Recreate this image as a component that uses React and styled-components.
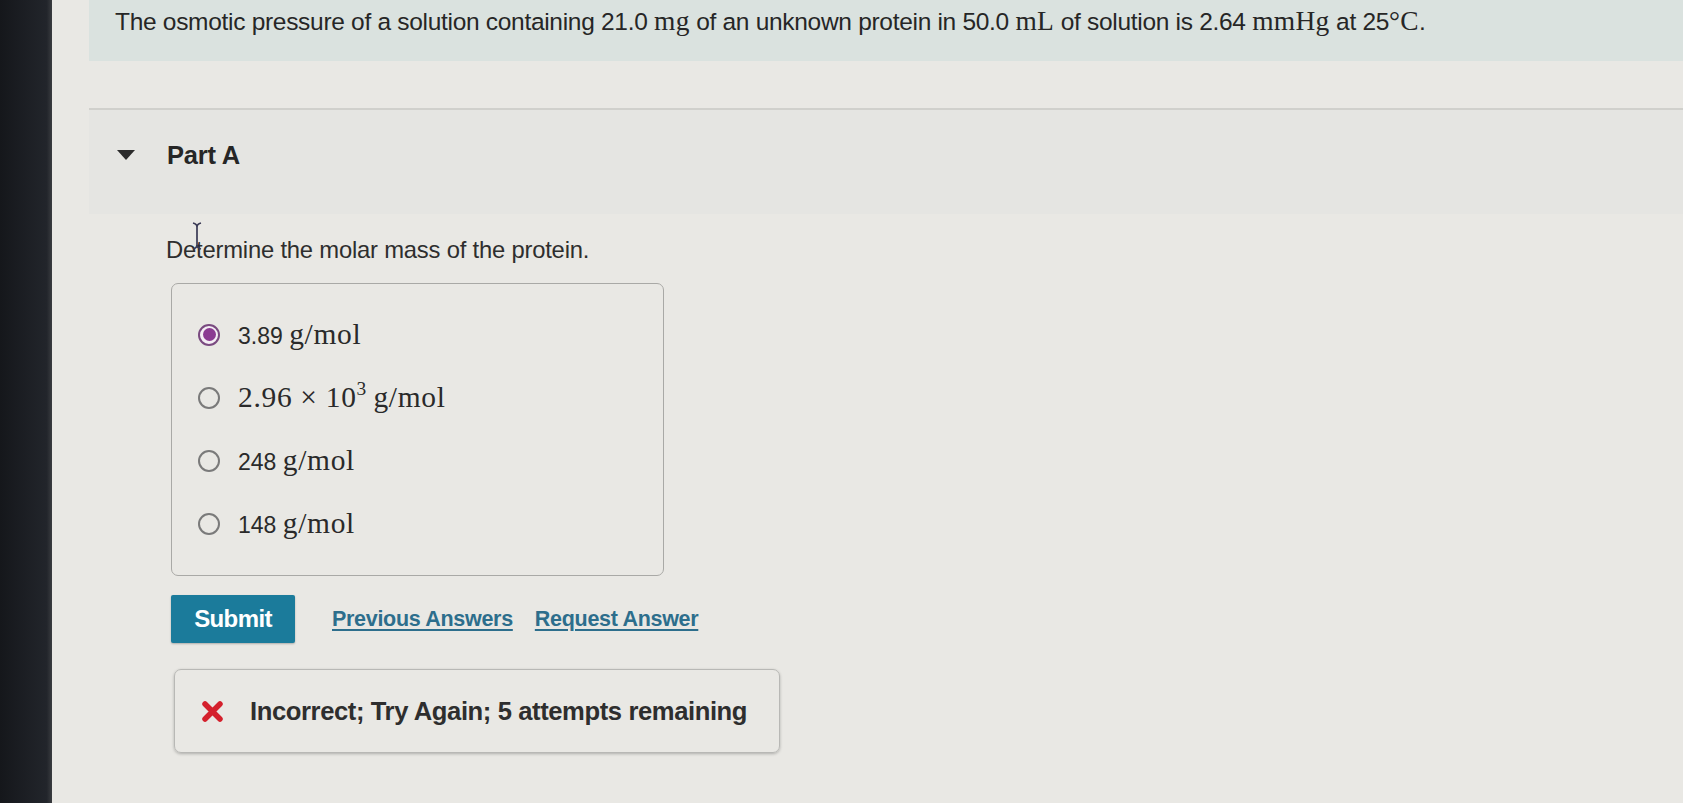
import React from "react";
import styled, { createGlobalStyle } from "styled-components";

const Global = createGlobalStyle`
  html, body {
    margin: 0;
    padding: 0;
    background: #1b1d22;
  }
  body {
    font-family: "Liberation Sans", Arial, sans-serif;
    color: #2f2f2f;
  }
`;

const options = [
  { id: "a", num: "3.89", unit: "g/mol", checked: true },
  { id: "b", num: "2.96 × 10", sup: "3", unit: "g/mol", math: true },
  { id: "c", num: "248", unit: "g/mol" },
  { id: "d", num: "148", unit: "g/mol" },
];

const App = () => {
  return (
    <Screen>
      <Global />
      <Bezel />
      <Page>
        <Banner>
          <Question>
            The osmotic pressure of a solution containing 21.0 <M>mg</M> of an unknown
            protein in 50.0 <M>mL</M> of solution is 2.64 <M>mmHg</M> at 25<M>°C</M>.
          </Question>
        </Banner>
        <Divider />
        <PartHeader>
          <Caret viewBox="0 0 20 12">
            <path d="M1 1 L19 1 L10 11 Z" fill="#2b2b2b" />
          </Caret>
          <PartTitle>Part A</PartTitle>
        </PartHeader>
        <Body>
          <Prompt>
            Determine the molar mass of the protein.
            <Cursor viewBox="0 0 12 28">
              <path d="M2 1 Q6 2 6 5 Q6 2 10 1 M6 5 V23 M2 27 Q6 26 6 23 Q6 26 10 27" stroke="#3a3a55" strokeWidth="1.7" fill="none" />
            </Cursor>
          </Prompt>
          <Choices>
            {options.map((o) => (
              <Choice key={o.id}>
                <Radio $checked={o.checked} />
                <ChoiceText>
                  {o.math ? (
                    <MathText>
                      {o.num}
                      <sup>{o.sup}</sup>
                    </MathText>
                  ) : (
                    <span>{o.num}</span>
                  )}{" "}
                  <MathText>{o.unit}</MathText>
                </ChoiceText>
              </Choice>
            ))}
          </Choices>
          <Actions>
            <SubmitButton>Submit</SubmitButton>
            <LinkText>Previous Answers</LinkText>
            <LinkText>Request Answer</LinkText>
          </Actions>
          <Feedback>
            <XMark viewBox="0 0 20 20">
              <path d="M3.5 3.5 L16.5 16.5 M16.5 3.5 L3.5 16.5" stroke="#d4202c" strokeWidth="4.8" strokeLinecap="round" />
            </XMark>
            <FeedbackText>Incorrect; Try Again; 5 attempts remaining</FeedbackText>
          </Feedback>
        </Body>
      </Page>
    </Screen>
  );
};

export default App;

const Screen = styled.div`
  display: flex;
  width: 100%;
  height: 803px;
  overflow: hidden;
`;

const Bezel = styled.div`
  width: 52px;
  flex-shrink: 0;
  background: linear-gradient(90deg, #15171b 0%, #22252b 90%, #3a3c40 100%);
`;

const Page = styled.div`
  flex: 1;
  background: #e9e8e4;
  padding-left: 37px;
  display: flex;
  flex-direction: column;
`;

const Banner = styled.div`
  height: 61px;
  background: #dae2df;
  display: flex;
  align-items: flex-start;
  padding: 6px 0 0 26px;
  box-sizing: border-box;
`;

const Question = styled.div`
  font-size: 24.5px;
  color: #262626;
  letter-spacing: -0.3px;
  white-space: nowrap;
`;

const M = styled.span`
  font-family: "Liberation Serif", "Times New Roman", serif;
  font-size: 1.12em;
  letter-spacing: 0.3px;
`;

const MathText = styled.span`
  font-family: "Liberation Serif", "Times New Roman", serif;
  font-size: 1.28em;
  letter-spacing: 0.7px;

  sup {
    font-size: 0.66em;
    vertical-align: 0.62em;
    line-height: 0;
  }
`;

const Divider = styled.div`
  margin-top: 47px;
  height: 2px;
  background: #d0d0cc;
`;

const PartHeader = styled.div`
  height: 104px;
  background: #e5e5e2;
  display: flex;
  align-items: center;
  padding-left: 27px;
  padding-bottom: 14px;
  box-sizing: border-box;
`;

const Caret = styled.svg`
  width: 20px;
  height: 12px;
`;

const PartTitle = styled.div`
  margin-left: 31px;
  font-size: 25.5px;
  font-weight: bold;
  letter-spacing: -0.2px;
  color: #262626;
`;

const Body = styled.div`
  padding-left: 82px;
  display: flex;
  flex-direction: column;
  align-items: flex-start;
`;

const Prompt = styled.div`
  position: relative;
  margin-top: 22px;
  margin-left: -5px;
  font-size: 23.8px;
  letter-spacing: -0.2px;
  color: #2e2e2e;
`;

const Cursor = styled.svg`
  position: absolute;
  left: 25px;
  top: -14px;
  width: 12px;
  height: 28px;
`;

const Choices = styled.div`
  margin-top: 19px;
  width: 493px;
  height: 293px;
  box-sizing: border-box;
  border: 1.5px solid #a9a9a6;
  border-radius: 7px;
  padding: 32px 0 0 26px;
  display: flex;
  flex-direction: column;
  gap: 26px;
`;

const Choice = styled.div`
  display: flex;
  align-items: center;
  height: 37px;
`;

const Radio = styled.span`
  flex-shrink: 0;
  width: 22px;
  height: 22px;
  border-radius: 50%;
  border: 2px solid ${(p) => (p.$checked ? "#7a4a80" : "#7a7a7a")};
  box-sizing: border-box;
  position: relative;
  background: ${(p) => (p.$checked ? "#f4eef4" : "transparent")};

  &::after {
    content: "";
    display: ${(p) => (p.$checked ? "block" : "none")};
    position: absolute;
    inset: 2.5px;
    border-radius: 50%;
    background: #8b3a92;
  }
`;

const ChoiceText = styled.span`
  margin-left: 18px;
  font-size: 23px;
  color: #2a2a2a;
`;

const Actions = styled.div`
  margin-top: 19px;
  display: flex;
  align-items: center;
`;

const SubmitButton = styled.button`
  width: 124px;
  height: 48px;
  background: #1b7b9b;
  color: #fff;
  border: none;
  border-radius: 2px;
  font-family: "Liberation Sans", Arial, sans-serif;
  font-size: 24px;
  font-weight: bold;
  letter-spacing: -0.6px;
  box-shadow: 0 1px 2px rgba(0, 0, 0, 0.25);
  margin-right: 37px;
`;

const LinkText = styled.span`
  font-size: 21.5px;
  font-weight: bold;
  color: #2d6e8c;
  text-decoration: underline;
  text-underline-offset: 3px;
  letter-spacing: -0.3px;
  margin-right: 22px;
`;

const Feedback = styled.div`
  margin-top: 26px;
  margin-left: 3px;
  width: 606px;
  height: 84px;
  box-sizing: border-box;
  border: 1.5px solid #b8b8b5;
  border-radius: 7px;
  box-shadow: 0 1px 3px rgba(0, 0, 0, 0.25);
  display: flex;
  align-items: center;
  padding-left: 26px;
`;

const XMark = styled.svg`
  flex-shrink: 0;
  width: 23px;
  height: 23px;
`;

const FeedbackText = styled.span`
  margin-left: 26px;
  font-size: 25.6px;
  font-weight: bold;
  color: #2e2e2e;
  letter-spacing: -0.4px;
`;
